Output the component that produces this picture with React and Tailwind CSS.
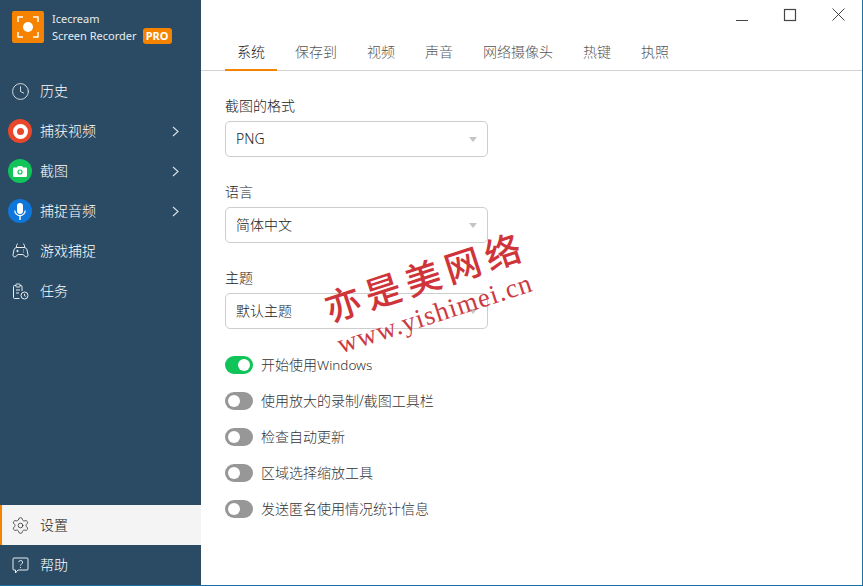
import React from 'react';
import { Clock, Settings } from 'lucide-react';

const cjk = "font-['Noto_Sans','Noto_Sans_CJK_SC',sans-serif]";

function Logo() {
  return (
    <div className="w-8 h-8 rounded-[2px] bg-[#f58300] flex items-center justify-center shrink-0">
      <svg width="22" height="22" viewBox="0 0 22 22" fill="none" stroke="#fff" strokeWidth="1.4">
        <path d="M1 6V1h5M16 1h5v5M21 16v5h-5M6 21H1v-5" />
        <circle cx="11" cy="11" r="5" fill="#fff" stroke="none" />
      </svg>
    </div>
  );
}

function GameIcon() {
  return (
    <svg width="17" height="16" viewBox="0 0 17 16" fill="none" stroke="#e8ecef" strokeWidth="1">
      <path d="M5 4.500h7c1.600 0 2.600.9 3 2.400l1 5c.3 1.600-1.600 2.700-2.800 1.600L11 11.500H6l-2.200 2c-1.200 1.100-3.100 0-2.800-1.600l1-5c.4-1.500 1.400-2.400 3-2.400z" />
      <path d="M4.500 4.500V2.500c0-.8.5-1.500 1.500-1.500M12.500 4.500V2.500c0-.8-.5-1.500-1.500-1.500" />
      <path d="M5.500 6.800v2.400M4.300 8h2.400M11 7h.8M11 9h.8" />
    </svg>
  );
}

function TaskIcon() {
  return (
    <svg width="17" height="17" viewBox="0 0 17 17" fill="none" stroke="#e8ecef" strokeWidth="1">
      <path d="M7.500 15.500H2.500a1 1 0 0 1-1-1V3.500a1 1 0 0 1 1-1H4M8 2.500h1a1 1 0 0 1 1 1V8" />
      <rect x="4" y="1" width="4" height="3" rx="0.5" />
      <path d="M4 7h4M4 10h3" />
      <circle cx="12.500" cy="12.500" r="3.500" />
      <path d="M12.500 10.800v1.800l1.300.8" />
    </svg>
  );
}

function HelpIcon() {
  return (
    <svg width="17" height="17" viewBox="0 0 17 17" fill="none" stroke="#e8ecef" strokeWidth="1">
      <path d="M2 1h13a1 1 0 0 1 1 1v10a1 1 0 0 1-1 1H6l-2.500 3v-3H2a1 1 0 0 1-1-1V2a1 1 0 0 1 1-1z" />
      <path d="M6.800 5.200a1.900 1.900 0 1 1 2.600 1.900c-.6.4-.9.7-.9 1.500" />
      <circle cx="8.500" cy="10.600" r="0.600" fill="#e8ecef" stroke="none" />
    </svg>
  );
}

function Chevron() {
  return (
    <svg width="7" height="11" viewBox="0 0 7 11" fill="none" stroke="#d5dde2" strokeWidth="1.200" className="ml-auto mr-[22px]">
      <path d="M1 1l5 4.500L1 10" />
    </svg>
  );
}

function RecordBadge() {
  return (
    <div className="w-6 h-6 rounded-full bg-[#e8472a] flex items-center justify-center">
      <div className="w-[15px] h-[15px] rounded-full border-[4px] border-white bg-[#e8472a]" />
    </div>
  );
}

function CameraBadge() {
  return (
    <div className="w-6 h-6 rounded-full bg-[#11c45a] flex items-center justify-center">
      <svg width="14" height="12" viewBox="0 0 14 12">
        <path d="M1 2.500h3L5 1h4l1 1.500h3a1 1 0 0 1 1 1V11a1 1 0 0 1-1 1H1a1 1 0 0 1-1-1V3.500a1 1 0 0 1 1-1z" fill="#fff" />
        <circle cx="7" cy="7" r="2.600" fill="#11c45a" />
        <circle cx="7" cy="7" r="1.400" fill="#fff" />
      </svg>
    </div>
  );
}

function MicBadge() {
  return (
    <div className="w-6 h-6 rounded-full bg-[#0f76dc] flex items-center justify-center">
      <svg width="12" height="17" viewBox="0 0 12 17" fill="none">
        <rect x="3" y="0" width="6" height="11" rx="3" fill="#fff" />
        <path d="M0.800 7.500a5.200 5.200 0 0 0 10.400 0" stroke="#fff" strokeWidth="1.200" />
        <path d="M6 13v4" stroke="#fff" strokeWidth="1.400" />
      </svg>
    </div>
  );
}

function NavItem({ icon, label, arrow, active }) {
  return (
    <div className={`h-10 flex items-center relative ${active ? 'bg-[#f4f4f4] text-[#222]' : 'text-white'}`}>
      {active && <div className="absolute left-0 top-0 bottom-0 w-0.5 bg-[#f58300]" />}
      <div className="w-10 flex items-center justify-center">{icon}</div>
      <span className="text-sm font-light">{label}</span>
      {arrow && <Chevron />}
    </div>
  );
}

function Select({ label, value }) {
  return (
    <div className="mb-5">
      <div className="text-sm font-light text-[#222] h-[30px] leading-[30px]">{label}</div>
      <div className="w-[263px] h-9 border border-[#cdcdcd] rounded-[5px] flex items-center pl-2.5 pr-2.5 text-sm font-light text-[#222]">
        <span>{value}</span>
        <div className="ml-auto w-0 h-0 border-x-[4px] border-x-transparent border-t-[5px] border-t-[#c4c4c4]" />
      </div>
    </div>
  );
}

function Toggle({ on, children }) {
  return (
    <div className="h-9 flex items-center gap-2">
      <div className={`w-7 h-[18px] rounded-full flex items-center px-[3px] ${on ? 'bg-[#11c45a] justify-end' : 'bg-[#979797] justify-start'}`}>
        <div className="w-3 h-3 rounded-full bg-white" />
      </div>
      <span className="text-sm font-light text-[#333]">{children}</span>
    </div>
  );
}

const tabs = ['系统', '保存到', '视频', '声音', '网络摄像头', '热键', '执照'];

export default function App() {
  return (
    <div className={`w-[863px] h-[586px] flex relative overflow-hidden bg-white border-r border-b border-[#1c6ea4] ${cjk}`}>
      <aside className="w-[201px] shrink-0 bg-[#2a4b63] flex flex-col">
        <div className="h-[71px] pt-[11px] pl-3 flex gap-2 text-[#e6ebef]">
          <Logo />
          <div className="text-[11px] leading-[17px] -mt-px">
            <div>Icecream</div>
            <div className="flex items-center gap-[6px]">
              <span>Screen Recorder</span>
              <span className="bg-[#f58300] text-white font-bold text-[11px] leading-[16px] w-[29px] text-center rounded-[3px]">PRO</span>
            </div>
          </div>
        </div>
        <NavItem icon={<Clock size={19} strokeWidth={1.100} color="#e8ecef" />} label="历史" />
        <NavItem icon={<RecordBadge />} label="捕获视频" arrow />
        <NavItem icon={<CameraBadge />} label="截图" arrow />
        <NavItem icon={<MicBadge />} label="捕捉音频" arrow />
        <NavItem icon={<GameIcon />} label="游戏捕捉" />
        <NavItem icon={<TaskIcon />} label="任务" />
        <div className="mt-auto">
          <NavItem active icon={<Settings size={19} strokeWidth={1} color="#333" />} label="设置" />
          <NavItem icon={<HelpIcon />} label="帮助" />
        </div>
      </aside>

      <main className="flex-1 flex flex-col">
        <div className="h-[30px] flex justify-end items-start">
          <svg width="140" height="30" viewBox="0 0 140 30" fill="none" stroke="#444" strokeWidth="1">
            <path d="M14 20.500h12" />
            <rect x="62.500" y="9.500" width="11" height="11" strokeWidth="1.200" />
            <path d="M110.500 8.500l12 12M122.500 8.500l-12 12" />
          </svg>
        </div>
        <div className="h-[41px] border-b border-[#d2d2d2] flex pl-6 gap-1.5 text-sm font-light text-[#555]">
          {tabs.map((t, i) => (
            <div key={t} className={`px-3 h-[41px] leading-[43px] ${i === 0 ? 'border-b-2 border-[#f58300] text-[#111]' : ''}`}>{t}</div>
          ))}
        </div>
        <div className="pl-6 pt-5">
          <Select label="截图的格式" value="PNG" />
          <Select label="语言" value="简体中文" />
          <Select label="主题" value="默认主题" />
          <div className="-mt-0.5">
            <Toggle on>开始使用<span className="text-[13.5px]">Windows</span></Toggle>
            <Toggle>使用放大的录制/截图工具栏</Toggle>
            <Toggle>检查自动更新</Toggle>
            <Toggle>区域选择缩放工具</Toggle>
            <Toggle>发送匿名使用情况统计信息</Toggle>
          </div>
        </div>
      </main>

      <div className="absolute left-[326px] top-[292px] -rotate-[18deg] origin-left text-[#cf343b] pointer-events-none font-medium text-[36px] leading-none tracking-[6px] whitespace-nowrap">亦是美网络</div>
      <div className="absolute left-[338px] top-[332px] -rotate-[18deg] origin-left text-[#cc3a42] pointer-events-none font-['Liberation_Serif',serif] text-[27px] leading-none tracking-[1px] whitespace-nowrap">www.yishimei.cn</div>
    </div>
  );
}
